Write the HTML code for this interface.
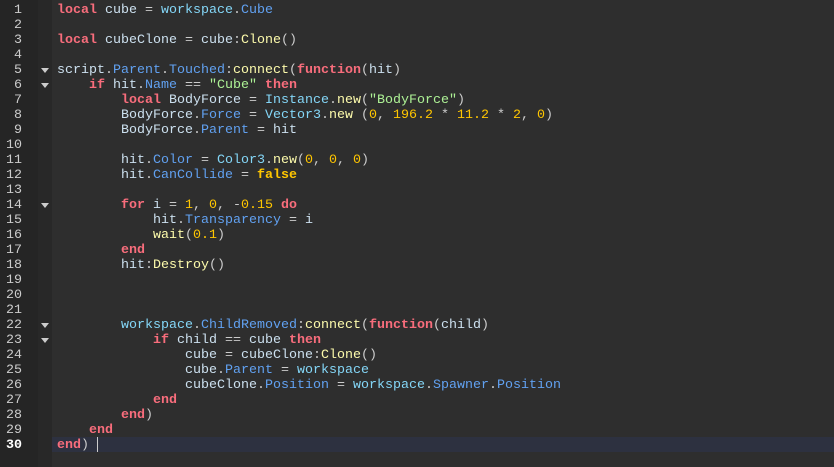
<!DOCTYPE html><html><head><style>
body{margin:0;width:834px;height:467px;background:#2e2e2e;overflow:hidden;font-family:"Liberation Mono","DejaVu Sans Mono",monospace;font-size:13.33px}
#g{position:absolute;left:0;top:0;width:38px;height:467px;background:#252525}
#f{position:absolute;left:38px;top:0;width:14px;height:467px;background:#282828}
#hl{position:absolute;left:52px;top:437px;width:782px;height:15px;background:#2d3140}
.ln{position:absolute;left:0;width:22px;text-align:right;color:#cccccc;line-height:15px}
pre{position:absolute;left:57px;top:3px;margin:0;font:inherit;line-height:15px;color:#cce0ef}
.k{color:#f86d7c;font-weight:bold}.p{color:#61a1f1}.b{color:#84d6f7}.fn{color:#fdfbac}.n{color:#ffc600}.s{color:#adf195}.o{color:#cccccc}.fb{color:#ffc600;font-weight:bold}
.ar{position:absolute;left:41px;width:0;height:0;border-left:4px solid transparent;border-right:4px solid transparent;border-top:5px solid #ccc}
.cur{position:absolute;left:97px;top:437px;width:1px;height:15px;background:#ccc}
</style></head><body>
<div id="g"></div><div id="f"></div><div id="hl"></div>
<div id="nums"></div>
<div class="ln" style="top:3px">1</div><div class="ln" style="top:18px">2</div><div class="ln" style="top:33px">3</div><div class="ln" style="top:48px">4</div><div class="ln" style="top:63px">5</div><div class="ln" style="top:78px">6</div><div class="ln" style="top:93px">7</div><div class="ln" style="top:108px">8</div><div class="ln" style="top:123px">9</div><div class="ln" style="top:138px">10</div><div class="ln" style="top:153px">11</div><div class="ln" style="top:168px">12</div><div class="ln" style="top:183px">13</div><div class="ln" style="top:198px">14</div><div class="ln" style="top:213px">15</div><div class="ln" style="top:228px">16</div><div class="ln" style="top:243px">17</div><div class="ln" style="top:258px">18</div><div class="ln" style="top:273px">19</div><div class="ln" style="top:288px">20</div><div class="ln" style="top:303px">21</div><div class="ln" style="top:318px">22</div><div class="ln" style="top:333px">23</div><div class="ln" style="top:348px">24</div><div class="ln" style="top:363px">25</div><div class="ln" style="top:378px">26</div><div class="ln" style="top:393px">27</div><div class="ln" style="top:408px">28</div><div class="ln" style="top:423px">29</div><div class="ln" style="top:438px;font-weight:bold;color:#fff">30</div>
<div class="ar" style="top:68px"></div><div class="ar" style="top:83px"></div><div class="ar" style="top:203px"></div><div class="ar" style="top:323px"></div><div class="ar" style="top:338px"></div>
<pre><span class="k">local</span> cube <span class="o">=</span> <span class="b">workspace</span><span class="o">.</span><span class="p">Cube</span>

<span class="k">local</span> cubeClone <span class="o">=</span> cube<span class="o">:</span><span class="fn">Clone</span><span class="o">()</span>

script<span class="o">.</span><span class="p">Parent</span><span class="o">.</span><span class="p">Touched</span><span class="o">:</span><span class="fn">connect</span><span class="o">(</span><span class="k">function</span><span class="o">(</span>hit<span class="o">)</span>
    <span class="k">if</span> hit<span class="o">.</span><span class="p">Name</span> <span class="o">==</span> <span class="s">"Cube"</span> <span class="k">then</span>
        <span class="k">local</span> BodyForce <span class="o">=</span> <span class="b">Instance</span><span class="o">.</span><span class="fn">new</span><span class="o">(</span><span class="s">"BodyForce"</span><span class="o">)</span>
        BodyForce<span class="o">.</span><span class="p">Force</span> <span class="o">=</span> <span class="b">Vector3</span><span class="o">.</span><span class="fn">new</span> <span class="o">(</span><span class="n">0</span><span class="o">,</span> <span class="n">196.2</span> <span class="o">*</span> <span class="n">11.2</span> <span class="o">*</span> <span class="n">2</span><span class="o">,</span> <span class="n">0</span><span class="o">)</span>
        BodyForce<span class="o">.</span><span class="p">Parent</span> <span class="o">=</span> hit

        hit<span class="o">.</span><span class="p">Color</span> <span class="o">=</span> <span class="b">Color3</span><span class="o">.</span><span class="fn">new</span><span class="o">(</span><span class="n">0</span><span class="o">,</span> <span class="n">0</span><span class="o">,</span> <span class="n">0</span><span class="o">)</span>
        hit<span class="o">.</span><span class="p">CanCollide</span> <span class="o">=</span> <span class="fb">false</span>

        <span class="k">for</span> i <span class="o">=</span> <span class="n">1</span><span class="o">,</span> <span class="n">0</span><span class="o">,</span> <span class="o">-</span><span class="n">0.15</span> <span class="k">do</span>
            hit<span class="o">.</span><span class="p">Transparency</span> <span class="o">=</span> i
            <span class="fn">wait</span><span class="o">(</span><span class="n">0.1</span><span class="o">)</span>
        <span class="k">end</span>
        hit<span class="o">:</span><span class="fn">Destroy</span><span class="o">()</span>



        <span class="b">workspace</span><span class="o">.</span><span class="p">ChildRemoved</span><span class="o">:</span><span class="fn">connect</span><span class="o">(</span><span class="k">function</span><span class="o">(</span>child<span class="o">)</span>
            <span class="k">if</span> child <span class="o">==</span> cube <span class="k">then</span>
                cube <span class="o">=</span> cubeClone<span class="o">:</span><span class="fn">Clone</span><span class="o">()</span>
                cube<span class="o">.</span><span class="p">Parent</span> <span class="o">=</span> <span class="b">workspace</span>
                cubeClone<span class="o">.</span><span class="p">Position</span> <span class="o">=</span> <span class="b">workspace</span><span class="o">.</span><span class="p">Spawner</span><span class="o">.</span><span class="p">Position</span>
            <span class="k">end</span>
        <span class="k">end</span><span class="o">)</span>
    <span class="k">end</span>
<span class="k">end</span><span class="o">)</span></pre>
<div class="cur"></div>
</body></html>
